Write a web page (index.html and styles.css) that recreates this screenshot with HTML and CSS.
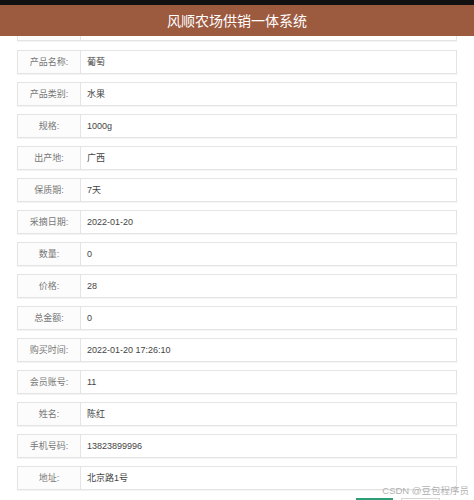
FILE: index.html
```html
<!DOCTYPE html>
<html lang="zh-CN">
<head>
<meta charset="UTF-8">
<meta name="viewport" content="width=device-width, initial-scale=1.0">
<title>风顺农场供销一体系统</title>
<link rel="stylesheet" href="styles.css">
</head>
<body>
<div class="topbar"></div>
<div class="header">风顺农场供销一体系统</div>
<div class="form">
    <div class="row cut"><div class="label"></div><div class="value"></div></div>
    <div class="row"><div class="label">产品名称:</div><div class="value">葡萄</div></div>
    <div class="row"><div class="label">产品类别:</div><div class="value">水果</div></div>
    <div class="row"><div class="label">规格:</div><div class="value">1000g</div></div>
    <div class="row"><div class="label">出产地:</div><div class="value">广西</div></div>
    <div class="row"><div class="label">保质期:</div><div class="value">7天</div></div>
    <div class="row"><div class="label">采摘日期:</div><div class="value">2022-01-20</div></div>
    <div class="row"><div class="label">数量:</div><div class="value">0</div></div>
    <div class="row"><div class="label">价格:</div><div class="value">28</div></div>
    <div class="row"><div class="label">总金额:</div><div class="value">0</div></div>
    <div class="row"><div class="label">购买时间:</div><div class="value">2022-01-20 17:26:10</div></div>
    <div class="row"><div class="label">会员账号:</div><div class="value">11</div></div>
    <div class="row"><div class="label">姓名:</div><div class="value">陈红</div></div>
    <div class="row"><div class="label">手机号码:</div><div class="value">13823899996</div></div>
    <div class="row"><div class="label">地址:</div><div class="value">北京路1号</div></div>
    <div class="buttons">
        <span class="btn btn-ok"></span>
        <span class="btn btn-back"></span>
    </div>
</div>
<div class="watermark">CSDN @豆包程序员</div>
</body>
</html>
```

FILE: styles.css
```css
body, html {
    margin: 0;
    height: 100%;
    overflow: hidden;
    background: #fff;
    font-family: "Liberation Sans", "Noto Sans CJK SC", sans-serif;
}

.topbar {
    height: 5px;
    background: #111;
}

.header {
    height: 31px;
    line-height: 31px;
    background: #9c5a3f;
    color: #fff;
    text-align: center;
    font-size: 14px;
    font-family: "Noto Sans CJK SC", sans-serif;
}

.form {
    margin: 0 17px;
}

.row {
    display: flex;
    height: 22px;
    border: 1px solid #e4e4e4;
    margin-bottom: 8px;
    font-size: 9px;
    box-shadow: 0 1px 1px rgba(0, 0, 0, 0.04);
}

.row.cut {
    height: 4px;
    border-top: none;
    margin-bottom: 9px;
}

.label {
    width: 62px;
    flex: none;
    text-align: center;
    line-height: 22px;
    color: #777;
    background: #fcfcfc;
    border-right: 1px solid #e4e4e4;
}

.value {
    flex: 1;
    padding-left: 6px;
    line-height: 22px;
    color: #444;
}

.buttons {
    display: flex;
    justify-content: flex-end;
    gap: 8px;
    margin-right: 17px;
}

.btn {
    display: inline-block;
    width: 37px;
    height: 20px;
    box-sizing: border-box;
}

.btn-ok {
    background: #2e9e78;
}

.btn-back {
    width: 39px;
    border: 1px solid #d6d6d6;
    background: #fff;
}

.watermark {
    position: absolute;
    right: 5px;
    top: 483px;
    font-size: 9.5px;
    color: rgba(150, 150, 150, 0.75);
}
```
